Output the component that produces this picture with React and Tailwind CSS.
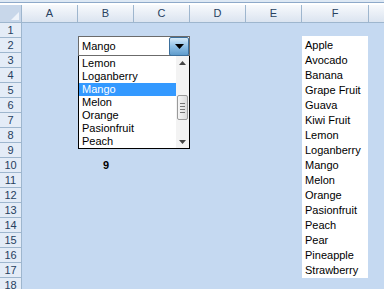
import React from 'react';

const cols = [
  { name: 'A', w: 'w-[56px]' },
  { name: 'B', w: 'w-[56px]' },
  { name: 'C', w: 'w-[56px]' },
  { name: 'D', w: 'w-[56px]' },
  { name: 'E', w: 'w-[56px]' },
  { name: 'F', w: 'w-[67px]' },
];

const fruits = [
  'Apple', 'Avocado', 'Banana', 'Grape Fruit', 'Guava', 'Kiwi Fruit', 'Lemon', 'Loganberry',
  'Mango', 'Melon', 'Orange', 'Pasionfruit', 'Peach', 'Pear', 'Pineapple', 'Strawberry',
];

const listItems = ['Lemon', 'Loganberry', 'Mango', 'Melon', 'Orange', 'Pasionfruit', 'Peach'];

const rows = Array.from({ length: 18 }, (_, i) => i + 1);

function ComboBox() {
  return (
    <div className="absolute left-[78px] top-[36px] w-[112px] text-[11px] font-['Liberation_Sans',Arial,sans-serif] text-black">
      {/* closed part */}
      <div className="flex h-[20px] items-center border border-[#6b6b6b] bg-white pl-[3px]">
        <span className="flex-1 leading-none">Mango</span>
        <div className="flex h-[19px] w-[20px] items-center justify-center rounded-[2px] border border-[#3b6f9c] bg-gradient-to-b from-[#d6eaf8] via-[#8fc0e6] to-[#5f9ccc]">
          <svg width="9" height="5" viewBox="0 0 9 5"><path d="M0 0h9L4.5 5z" fill="#000" /></svg>
        </div>
      </div>
      {/* open list */}
      <div className="flex h-[93px] border border-t-0 border-black bg-white">
        <div className="flex-1 pt-[1px]">
          {listItems.map(item => (
            <div
              key={item}
              className={`h-[13px] pl-[3px] leading-[13px] ${item === 'Mango' ? 'bg-[#3399ff] text-white' : ''}`}
            >
              {item}
            </div>
          ))}
        </div>
        <div className="flex w-[13px] flex-col items-center bg-[#f3f3f3]">
          <div className="flex h-[13px] items-center justify-center">
            <svg width="7" height="4" viewBox="0 0 7 4"><path d="M3.5 0L7 4H0z" fill="#444" /></svg>
          </div>
          <div className="h-[26px]" />
          <div className="flex h-[25px] w-[11px] flex-col items-center justify-center gap-[2px] rounded-[2px] border border-[#9a9a9a] bg-gradient-to-r from-[#f6f6f6] to-[#dcdcdc]">
            <div className="h-px w-[5px] bg-[#777]" />
            <div className="h-px w-[5px] bg-[#777]" />
            <div className="h-px w-[5px] bg-[#777]" />
            <div className="h-px w-[5px] bg-[#777]" />
          </div>
          <div className="flex-1" />
          <div className="flex h-[13px] items-center justify-center">
            <svg width="7" height="4" viewBox="0 0 7 4"><path d="M0 0h7L3.5 4z" fill="#444" /></svg>
          </div>
        </div>
      </div>
    </div>
  );
}

export default function App() {
  return (
    <div className="relative h-[289px] w-[384px] overflow-hidden bg-[#c5d9f1] font-['Liberation_Sans',Arial,sans-serif]">
      {/* formula bar edge */}
      <div className="h-[2px] bg-[#dde8f4]" />
      <div className="h-px bg-[#8ea9c9]" />
      <div className="h-[2px] bg-white" />

      {/* column headers */}
      <div className="flex h-[18px]">
        <div className="relative w-[22px] border-r border-b border-[#9eb6ce] bg-[#c8d7ea]">
          <svg className="absolute right-[2px] bottom-[2px]" width="8" height="8" viewBox="0 0 8 8">
            <path d="M8 0v8H0z" fill="#eef3fa" />
          </svg>
        </div>
        {cols.map(c => (
          <div
            key={c.name}
            className={`${c.w} flex items-center justify-center border-r border-b border-[#9eb6ce] bg-gradient-to-b from-[#f7f9fc] to-[#dbe4f0] text-[11px] text-[#27415f]`}
          >
            {c.name}
          </div>
        ))}
        <div className="flex-1 border-b border-[#9eb6ce] bg-gradient-to-b from-[#f7f9fc] to-[#dbe4f0]" />
      </div>

      {/* rows */}
      {rows.map(r => (
        <div key={r} className="flex h-[15px]">
          <div className="flex w-[22px] items-center justify-center border-r border-b border-[#9eb6ce] bg-[#e4ecf7] text-[11px] text-[#27415f]">
            {r}
          </div>
          <div className="w-[56px]" />
          <div className="flex w-[56px] items-center justify-center text-[11px] font-bold text-black">
            {r === 10 ? '9' : ''}
          </div>
          <div className="w-[56px]" />
          <div className="w-[56px]" />
          <div className="w-[56px]" />
          <div
            className={`w-[66px] pl-[3px] text-[11px] leading-[15px] text-black ${
              r >= 2 && r <= 17 ? 'bg-white' : r === 1 ? 'bg-[linear-gradient(to_bottom,transparent_13px,white_13px)]' : ''
            }`}
          >
            {r >= 2 && r <= 17 ? fruits[r - 2] : ''}
          </div>
        </div>
      ))}

      <ComboBox />
    </div>
  );
}
